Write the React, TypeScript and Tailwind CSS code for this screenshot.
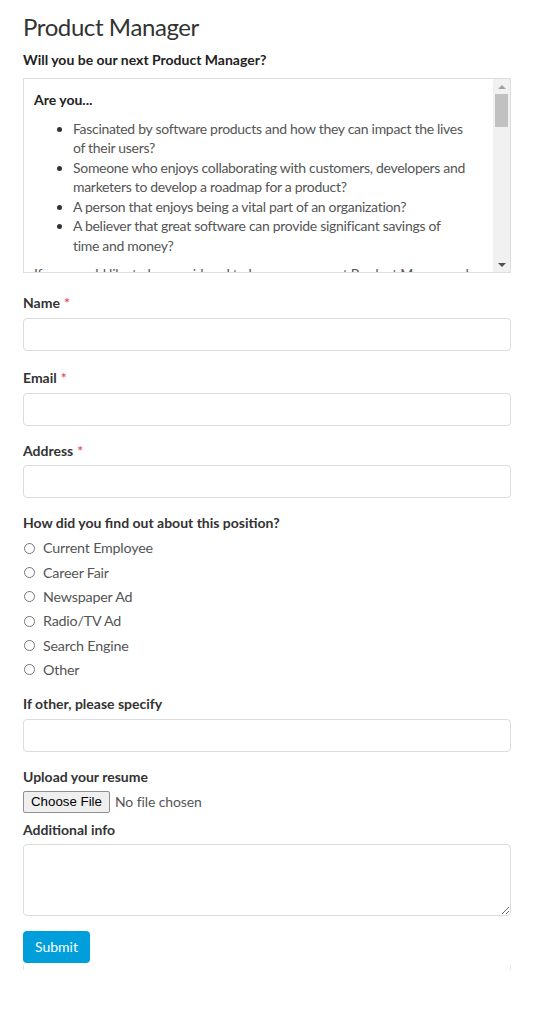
import { type ReactNode } from "react";

const font = { fontFamily: 'Lato, "Open Sans", sans-serif' };

const bullets = [
  "Fascinated by software products and how they can impact the lives of their users?",
  "Someone who enjoys collaborating with customers, developers and marketers to develop a roadmap for a product?",
  "A person that enjoys being a vital part of an organization?",
  "A believer that great software can provide significant savings of time and money?",
];

const sources = ["Current Employee", "Career Fair", "Newspaper Ad", "Radio/TV Ad", "Search Engine", "Other"];

function Label({ children, required, className = "" }: { children: ReactNode; required?: boolean; className?: string }) {
  return (
    <div className={`text-[14px] font-bold leading-[20px] text-[#333] ${className}`}>
      {children}
      {required && <span className="ml-[4px] text-[#f0506e]">*</span>}
    </div>
  );
}

function TextInput({ className = "" }: { className?: string }) {
  return (
    <input
      type="text"
      className={`block h-[33px] w-full rounded-[4px] border border-[#dcdcdc] bg-white px-3 text-[14px] text-[#555] outline-none ${className}`}
    />
  );
}

export default function App() {
  return (
    <div className="min-h-screen bg-white pl-[23px] pr-[22px] text-[#555]" style={font}>
      <h1 className="mt-[11px] text-[24px] font-normal leading-[32px] tracking-[-0.4px] text-[#333]">Product Manager</h1>
      <div className="mt-[7px] text-[14px] font-bold leading-[20px] text-[#222]">Will you be our next Product Manager?</div>

      {/* Description box with scrollbar */}
      <div className="mt-[8px] flex h-[195px] border border-[#dedede]">
        <div className="min-w-0 flex-1 overflow-hidden pl-[10px] pr-[24px] pt-[11px] text-[14px] leading-[19.5px] tracking-[-0.3px]">
          <div className="font-bold tracking-normal text-[#222]">Are you...</div>
          <ul className="mt-[9px] list-disc pl-[39px] marker:text-[#333]">
            {bullets.map((b) => (
              <li key={b}>{b}</li>
            ))}
          </ul>
          <p className="mt-[9px] whitespace-nowrap">
            If you would like to be considered to become our next Product Manager, please fill out the form below.
          </p>
        </div>
        <div className="flex w-[17px] shrink-0 flex-col items-center bg-[#f1f1f1]">
          <div className="flex h-[15px] items-center justify-center">
            <div className="h-0 w-0 border-x-[4px] border-b-[4px] border-x-transparent border-b-[#a3a3a3]" />
          </div>
          <div className="h-[33px] w-[13px] bg-[#c1c1c1]" />
          <div className="flex-1" />
          <div className="flex h-[15px] items-center justify-center">
            <div className="h-0 w-0 border-x-[4px] border-t-[4px] border-x-transparent border-t-[#505050]" />
          </div>
        </div>
      </div>

      <Label required className="mt-[20px]">Name</Label>
      <TextInput className="mt-[5px]" />

      <Label required className="mt-[17px]">Email</Label>
      <TextInput className="mt-[5px]" />

      <Label required className="mt-[15px]">Address</Label>
      <TextInput className="mt-[4px]" />

      <Label className="mt-[15px]">How did you find out about this position?</Label>
      <div className="mt-[3px] flex flex-col">
        {sources.map((s) => (
          <label key={s} className="flex h-[24.3px] items-center text-[14.3px] tracking-[-0.2px] text-[#555]">
            <span className="ml-[1px] h-[11px] w-[11px] shrink-0 rounded-full border border-[#767676] bg-white" />
            <span className="ml-[8px]">{s}</span>
          </label>
        ))}
      </div>

      <Label className="mt-[12px]">If other, please specify</Label>
      <TextInput className="mt-[5px]" />

      <Label className="mt-[15px]">Upload your resume</Label>
      <div className="mt-[4px] flex h-[22px] items-center">
        <button
          type="button"
          className="h-[22px] rounded-[2px] border border-[#8f8f8f] bg-[#efefef] px-[7px] text-[13.3px] text-black"
          style={{ fontFamily: '"Liberation Sans", Arial, sans-serif' }}
        >
          Choose File
        </button>
        <span className="ml-[5px] text-[14px] tracking-[-0.1px] text-[#555]">No file chosen</span>
      </div>

      <Label className="mt-[7px]">Additional info</Label>
      <textarea className="mt-[4px] block h-[72px] w-full rounded-[4px] border border-[#dcdcdc] bg-white px-3 py-2 text-[14px] outline-none" />

      <button
        type="submit"
        className="mt-[15px] h-[32px] w-[67px] rounded-[4px] bg-[#009fdc] text-[14px] text-white"
      >
        Submit
      </button>
      <div className="mt-[2px] h-[5px] border-x border-[#e6e6e6]" />
    </div>
  );
}
